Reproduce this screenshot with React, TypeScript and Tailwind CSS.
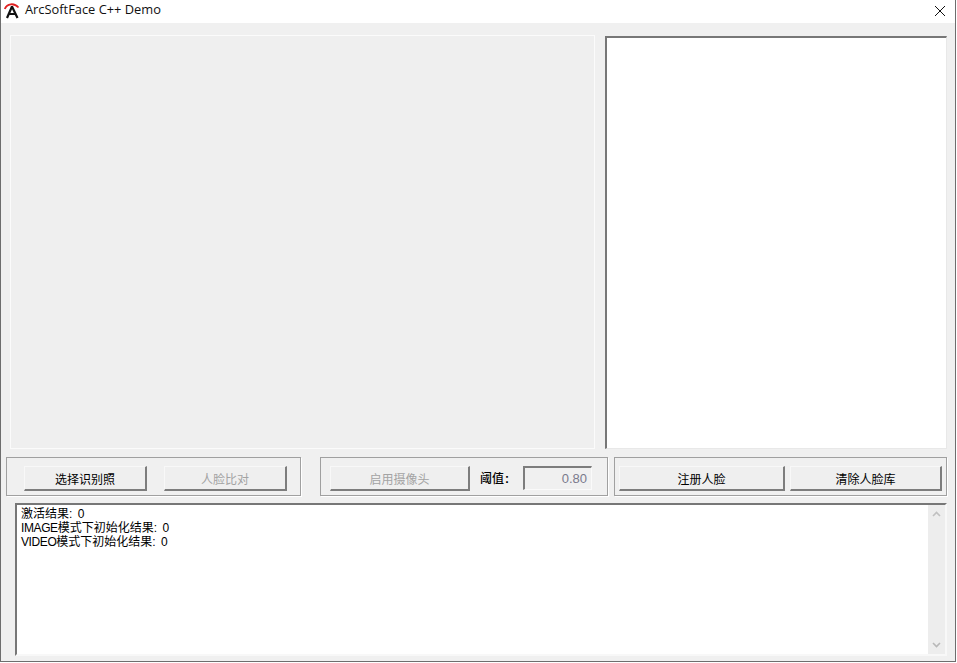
import React from 'react';

const font = 'font-["Liberation_Sans","Noto_Sans_CJK_SC",sans-serif]';

function Logo() {
  return (
    <svg width="17" height="17" viewBox="0 0 17 17" className="shrink-0">
      <path d="M0.8 7 C3 1.5 10 0.5 14.5 5.5" fill="none" stroke="#e02020" strokeWidth="1.8" />
      <path d="M8 4.5 L3 16 M8 4.5 L13.5 16 M5 12 L11.5 12" fill="none" stroke="#111" strokeWidth="2.2" />
    </svg>
  );
}

function WinButton({ label, disabled, className }: { label: string; disabled?: boolean; className: string }) {
  return (
    <div
      className={`flex h-[25px] items-center justify-center border-t border-l border-t-[#f8f8f8] border-l-[#f8f8f8] border-r-2 border-b-2 border-r-[#7d7d7d] border-b-[#7d7d7d] bg-[#efefef] pt-[3px] text-[12px] ${
        disabled ? 'text-[#a3a3a3]' : 'text-black'
      } ${className}`}
    >
      {label}
    </div>
  );
}

function GroupBox({ className, children }: { className: string; children: React.ReactNode }) {
  return (
    <div className={`flex h-[39px] items-start border border-[#a0a0a0] shadow-[1px_1px_0_#fff] ${className}`}>
      {children}
    </div>
  );
}

function LogLine({ prefix, cjk, value }: { prefix?: string; cjk: string; value: string }) {
  return (
    <div>
      {prefix && <span className="tracking-[-0.4px]">{prefix}</span>}
      {cjk}
      <span className="mr-[2px]">:</span> {value}
    </div>
  );
}

export default function App() {
  return (
    <div className={`h-[663px] w-[957px] overflow-hidden bg-white ${font}`}>
      <div className="flex h-[662px] w-[956px] flex-col border-r border-b border-l border-[#6e6e6e] bg-[#f0f0f0]">
        {/* Title bar */}
        <div className="flex h-[23px] items-center bg-white pl-[3px] pr-[9px]">
          <div className="-mt-[2px]">
            <Logo />
          </div>
          <span className="ml-[4px] -mt-[3px] font-['Open_Sans'] text-[12.85px] text-[#111]">ArcSoftFace C++ Demo</span>
          <svg width="12" height="12" viewBox="0 0 12 12" className="ml-auto -mt-[2px]">
            <path d="M1 1 L11 11 M11 1 L1 11" stroke="#111" strokeWidth="1" />
          </svg>
        </div>

        {/* Preview panels */}
        <div className="mt-[12px] flex h-[414px] pl-[9px] pr-[8px]">
          <div className="h-full w-[586px] border border-[#fbfbfb] bg-[#efefef]" />
          <div className="ml-[10px] mt-[1px] h-[413px] w-[342px] border-t-2 border-l-2 border-t-[#777] border-l-[#777] border-r border-b border-r-[#e8e8e8] border-b-[#e8e8e8] bg-white" />
        </div>

        {/* Button groups */}
        <div className="mt-[8px] flex pl-[5px]">
          <GroupBox className="w-[295px] pl-[17px] pt-[8px]">
            <WinButton label="选择识别照" className="w-[123px]" />
            <WinButton label="人脸比对" disabled className="ml-[17px] w-[123px]" />
          </GroupBox>
          <GroupBox className="ml-[19px] w-[288px] pl-[9px] pt-[8px]">
            <WinButton label="启用摄像头" disabled className="w-[140px]" />
            <span className="ml-[10px] mt-[4px] text-[12px] font-medium text-black">
              阈值<span className="ml-[1px] font-bold">:</span>
            </span>
            <div className="ml-[14px] flex h-[24px] w-[69px] items-center justify-end border-t-2 border-l-2 border-t-[#7d7d7d] border-l-[#7d7d7d] border-r border-b border-r-[#fafafa] border-b-[#fafafa] pr-[4px] text-[13px] text-[#7a7a8c]">
              0.80
            </div>
          </GroupBox>
          <GroupBox className="ml-[6px] w-[333px] pl-[4px] pt-[8px]">
            <WinButton label="注册人脸" className="w-[166px]" />
            <WinButton label="清除人脸库" className="ml-[5px] w-[152px]" />
          </GroupBox>
        </div>

        {/* Log output */}
        <div className="ml-[14px] mt-[7px] flex h-[153px] w-[932px] border-t-2 border-l-2 border-t-[#777] border-l-[#777] border-r-2 border-b-2 border-r-[#f8f8f8] border-b-[#f8f8f8] bg-white">
          <div className="flex-1 pl-[4px] pt-[2px] text-[12px] leading-[14px] text-black">
            <LogLine cjk="激活结果" value="0" />
            <LogLine prefix="IMAGE" cjk="模式下初始化结果" value="0" />
            <LogLine prefix="VIDEO" cjk="模式下初始化结果" value="0" />
          </div>
          <div className="flex w-[17px] flex-col items-center justify-between bg-[#ededed] py-[6px]">
            <svg width="9" height="6" viewBox="0 0 9 6">
              <path d="M1 5 L4.5 1.5 L8 5" fill="none" stroke="#c0c0c0" strokeWidth="1.6" />
            </svg>
            <svg width="9" height="6" viewBox="0 0 9 6">
              <path d="M1 1 L4.5 4.5 L8 1" fill="none" stroke="#b8b8b8" strokeWidth="1.6" />
            </svg>
          </div>
        </div>
      </div>
    </div>
  );
}
